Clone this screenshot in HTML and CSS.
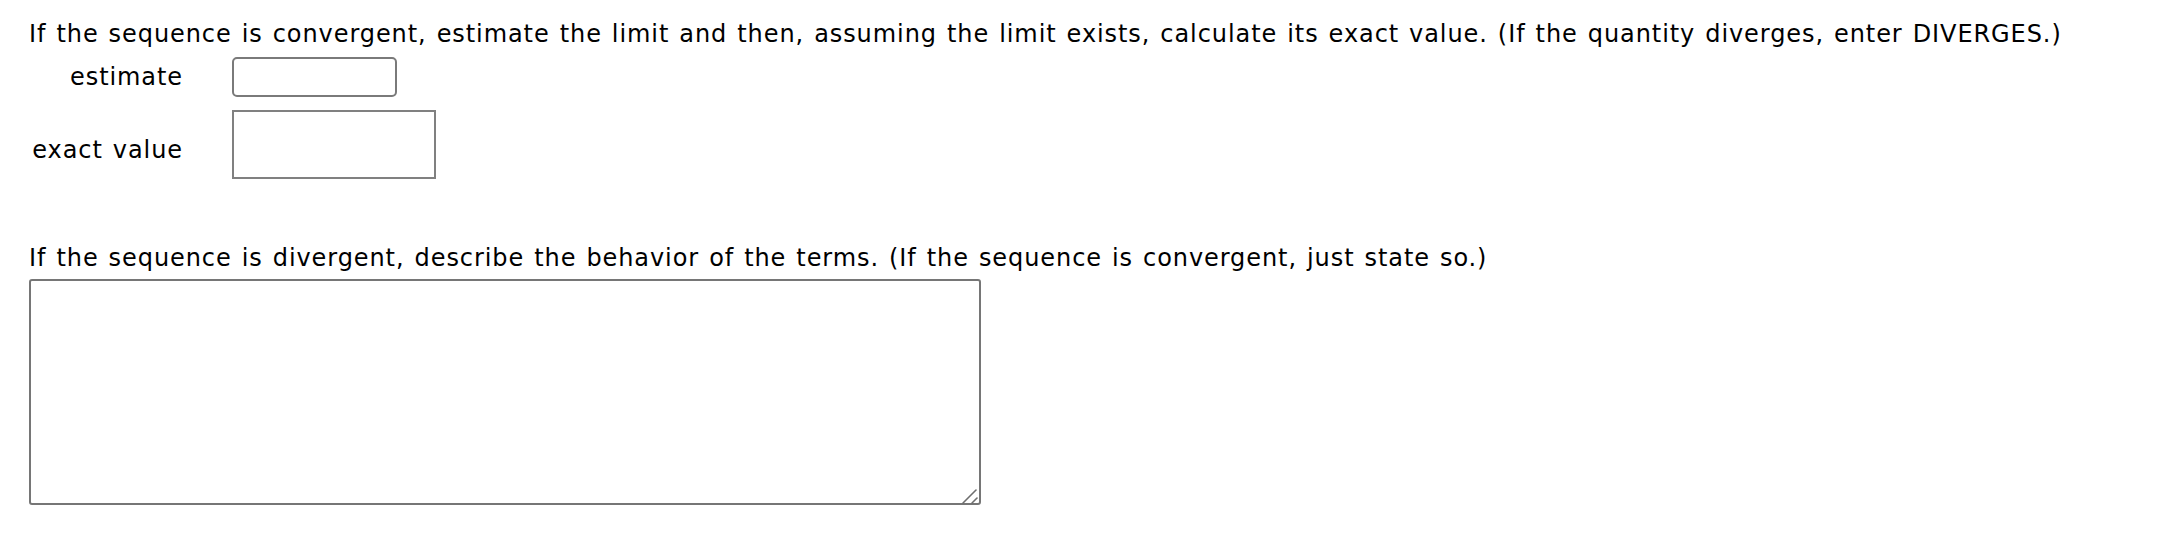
FILE: index.html
```html
<!DOCTYPE html>
<html>
<head>
<meta charset="utf-8">
<link rel="stylesheet" href="styles.css">
</head>
<body>
<div class="page">
  <p class="q q1">If the sequence is convergent, estimate the limit and then, assuming the limit exists, calculate its exact value. (If the quantity diverges, enter DIVERGES.)</p>
  <div class="rows">
    <div class="row row-est">
      <label class="lbl">estimate</label>
      <input class="inp-est" type="text">
    </div>
    <div class="row row-exact">
      <label class="lbl lbl-exact">exact value</label>
      <div class="box-exact"></div>
    </div>
  </div>
  <p class="q q2">If the sequence is divergent, describe the behavior of the terms. (If the sequence is convergent, just state so.)</p>
  <div class="ta-wrap">
    <textarea class="ta"></textarea>
    <svg class="grip" width="18" height="18" viewBox="0 0 18 18">
      <line x1="2" y1="16" x2="15" y2="3" stroke="#6e6e6e" stroke-width="1.6" stroke-linecap="round"/>
      <line x1="11" y1="16" x2="16" y2="11" stroke="#6e6e6e" stroke-width="1.6" stroke-linecap="round"/>
    </svg>
  </div>
</div>
</body>
</html>
```
FILE: styles.css
```css
html, body {
  margin: 0;
  padding: 0;
  background: #fff;
}
.page {
  padding: 20px 0 0 29px;
  font-family: "DejaVu Sans", Verdana, sans-serif;
  font-size: 24px;
  letter-spacing: 0.92px;
  word-spacing: 1.5px;
  color: #000;
}
.q {
  margin: 0;
  line-height: 28px;
}
.rows {
  display: flex;
  flex-direction: column;
  gap: 13px;
  margin-top: 9px;
}
.row {
  display: flex;
  align-items: center;
  gap: 49px;
}
.lbl {
  width: 154px;
  text-align: right;
  line-height: 28px;
  white-space: nowrap;
}
.lbl-exact {
  padding-top: 11px;
}
.inp-est {
  box-sizing: border-box;
  width: 165px;
  height: 40px;
  border: 2px solid #7a7a7a;
  border-radius: 5px;
  margin: 0;
  padding: 0 6px;
  font: inherit;
}
.box-exact {
  box-sizing: border-box;
  width: 204px;
  height: 69px;
  border: 2px solid #808080;
}
.q2 {
  margin-top: 65px;
}
.ta-wrap {
  position: relative;
  width: 952px;
  margin-top: 7px;
}
.ta {
  display: block;
  box-sizing: border-box;
  width: 952px;
  height: 226px;
  margin: 0;
  border: 2px solid #767676;
  border-radius: 3px;
  font: inherit;
  resize: none;
}
.grip {
  position: absolute;
  right: 2px;
  bottom: 0;
  pointer-events: none;
}
```
